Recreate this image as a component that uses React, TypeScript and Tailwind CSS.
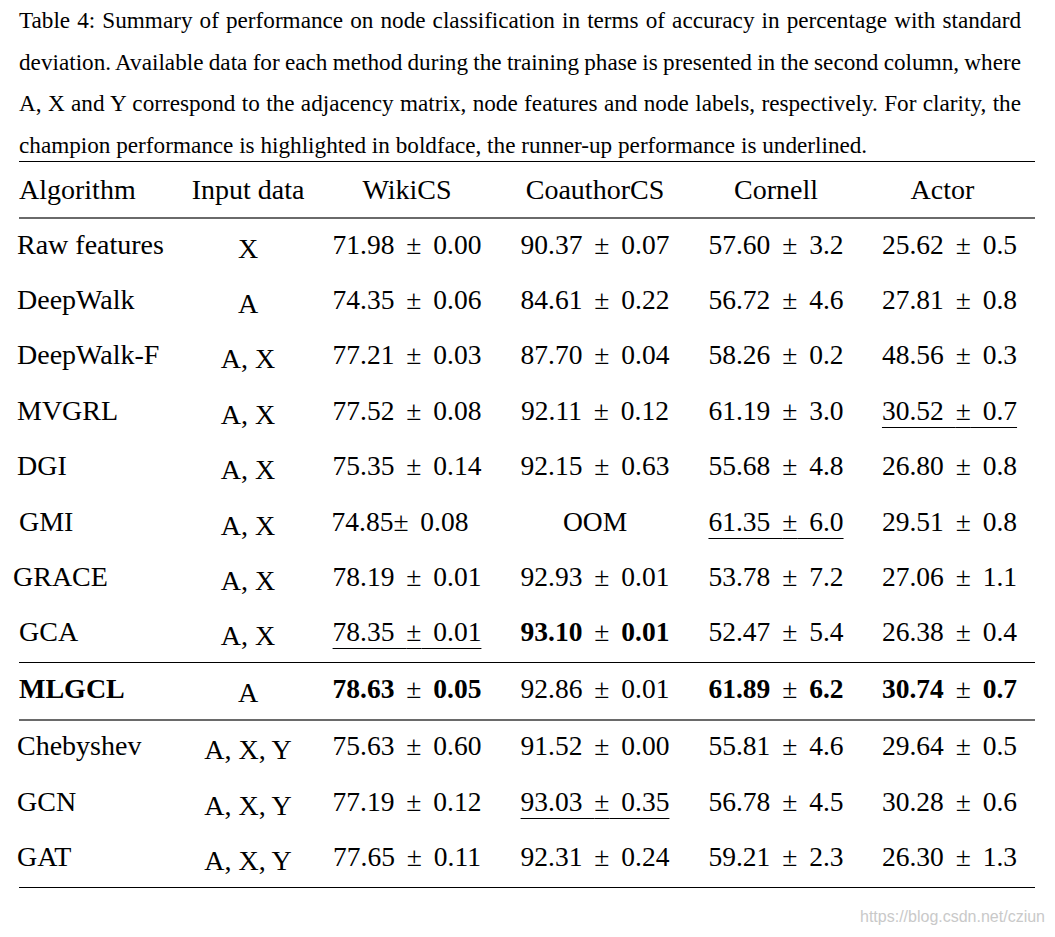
import React from "react";

type Cell = { v: string; bold?: boolean; under?: boolean; shift?: string };
type Row = { name: string; nameBold?: boolean; shift?: string; input: string; cells: Cell[] };

const c = (v: string, o: Partial<Cell> = {}): Cell => ({ v, ...o });

const topRows: Row[] = [
  { name: "Raw features", input: "X", cells: [c("71.98 ± 0.00"), c("90.37 ± 0.07"), c("57.60 ± 3.2"), c("25.62 ± 0.5")] },
  { name: "DeepWalk", input: "A", cells: [c("74.35 ± 0.06"), c("84.61 ± 0.22"), c("56.72 ± 4.6"), c("27.81 ± 0.8")] },
  { name: "DeepWalk-F", input: "A, X", cells: [c("77.21 ± 0.03"), c("87.70 ± 0.04"), c("58.26 ± 0.2"), c("48.56 ± 0.3")] },
  { name: "MVGRL", input: "A, X", cells: [c("77.52 ± 0.08"), c("92.11 ± 0.12"), c("61.19 ± 3.0"), c("30.52 ± 0.7", { under: true })] },
  { name: "DGI", input: "A, X", cells: [c("75.35 ± 0.14"), c("92.15 ± 0.63"), c("55.68 ± 4.8"), c("26.80 ± 0.8")] },
  { name: "GMI", shift: "ml-0", input: "A, X", cells: [c("74.85± 0.08", { shift: "pr-[14px]" }), c("OOM"), c("61.35 ± 6.0", { under: true }), c("29.51 ± 0.8")] },
  { name: "GRACE", shift: "-ml-[6px]", input: "A, X", cells: [c("78.19 ± 0.01"), c("92.93 ± 0.01"), c("53.78 ± 7.2"), c("27.06 ± 1.1")] },
  { name: "GCA", shift: "ml-0", input: "A, X", cells: [c("78.35 ± 0.01", { under: true }), c("93.10 ± 0.01", { bold: true }), c("52.47 ± 5.4"), c("26.38 ± 0.4")] },
];

const ours: Row = {
  name: "MLGCL", nameBold: true, shift: "ml-0", input: "A",
  cells: [c("78.63 ± 0.05", { bold: true }), c("92.86 ± 0.01"), c("61.89 ± 6.2", { bold: true }), c("30.74 ± 0.7", { bold: true })],
};

const supRows: Row[] = [
  { name: "Chebyshev", input: "A, X, Y", cells: [c("75.63 ± 0.60"), c("91.52 ± 0.00"), c("55.81 ± 4.6"), c("29.64 ± 0.5")] },
  { name: "GCN", input: "A, X, Y", cells: [c("77.19 ± 0.12"), c("93.03 ± 0.35", { under: true }), c("56.78 ± 4.5"), c("30.28 ± 0.6")] },
  { name: "GAT", input: "A, X, Y", cells: [c("77.65 ± 0.11"), c("92.31 ± 0.24"), c("59.21 ± 2.3"), c("26.30 ± 1.3")] },
];

const grid = "grid grid-cols-[151px_156px_162px_214px_148px_185px] items-center";

const caption = [
  "Table 4: Summary of performance on node classification in terms of accuracy in percentage with standard",
  "deviation. Available data for each method during the training phase is presented in the second column, where",
  "A, X and Y correspond to the adjacency matrix, node features and node labels, respectively. For clarity, the",
];

function Value({ cell }: { cell: Cell }) {
  const parts = cell.v.split("±");
  const cls = `whitespace-pre text-[27.5px] [word-spacing:5px] ${cell.bold ? "font-bold" : ""} ${
    cell.under ? "underline decoration-1 underline-offset-[7px]" : ""
  }`;
  if (parts.length === 1) return <span className={cls}>{cell.v}</span>;
  return (
    <span className={cls}>
      {parts[0]}
      <span className="font-normal">±</span>
      {parts[1]}
    </span>
  );
}

function TableRow({ row }: { row: Row }) {
  return (
    <div className={`${grid} h-[55.4px] pb-[4px]`}>
      <div className={`${row.shift ?? "-ml-[2px]"} ${row.nameBold ? "font-bold" : ""} whitespace-nowrap`}>{row.name}</div>
      <div className="text-center pt-[8px]">{row.input}</div>
      {row.cells.map((cell, i) => (
        <div key={i} className={`text-center ${i === 3 ? "pl-[14px]" : ""} ${cell.shift ?? ""}`}>
          <Value cell={cell} />
        </div>
      ))}
    </div>
  );
}

export default function App() {
  return (
    <div className="w-[1055px] h-[937px] bg-white text-black font-['Liberation_Serif',serif] overflow-hidden">
      <div className="ml-[19px] w-[1002px] text-[23.2px] leading-[41.5px]">
        {caption.map((line) => (
          <p key={line} className="text-justify [text-align-last:justify] whitespace-nowrap [word-spacing:-2.5px]">
            {line}
          </p>
        ))}
        <p>champion performance is highlighted in boldface, the runner-up performance is underlined.</p>
      </div>

      <div className="ml-[19px] w-[1016px] -mt-[5px] text-[28px]">
        <div className="h-px bg-black" />
        <div className={`${grid} h-[55px]`}>
          <div>Algorithm</div>
          <div className="text-center">Input data</div>
          <div className="text-center">WikiCS</div>
          <div className="text-center">CoauthorCS</div>
          <div className="text-center">Cornell</div>
          <div className="text-center">Actor</div>
        </div>
        <div className="h-[2px] bg-[#6a6a6a]" />
        {topRows.map((r) => (
          <TableRow key={r.name} row={r} />
        ))}
        <div className="h-px bg-black" />
        <TableRow row={ours} />
        <div className="h-[2px] bg-[#6a6a6a]" />
        {supRows.map((r) => (
          <TableRow key={r.name} row={r} />
        ))}
        <div className="h-px bg-black" />
      </div>

      <div className="flex justify-end pr-[10px] mt-[17px]">
        <span className="font-['Liberation_Sans',sans-serif] text-[16px] text-[#c9c9c9]">
          https://blog.csdn.net/cziun
        </span>
      </div>
    </div>
  );
}
